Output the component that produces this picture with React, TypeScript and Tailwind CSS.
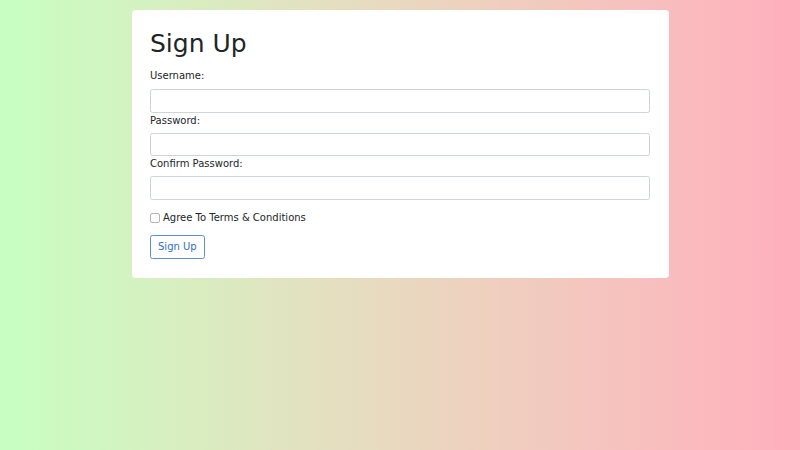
import React from "react";

export default function App() {
  return (
    <div
      className="min-h-screen w-full bg-gradient-to-r from-[#c7ffc1] to-[#ffafbd] pt-[10px] text-[#212529]"
      style={{ fontFamily: '"DejaVu Sans", "Liberation Sans", sans-serif' }}
    >
      <div className="mx-auto w-[537px] rounded-[4px] bg-white pl-[18.5px] pr-[18.75px] pt-[18.75px] pb-[18.75px]">
        <h1 className="mb-[9.5px] text-[25px] leading-[30px] font-normal">Sign Up</h1>
        <form className="flex flex-col text-[10px] leading-[15px]" onSubmit={(e) => e.preventDefault()}>
          <label className="mb-[5.5px] block">Username:</label>
          <input
            type="text"
            className="block h-[23.75px] w-full rounded-[2.5px] border border-[#ced4da] bg-white px-[7px] outline-none"
          />
          <label className="mb-[5px] block">Password:</label>
          <input
            type="password"
            className="block h-[23.75px] w-full rounded-[2.5px] border border-[#ced4da] bg-white px-[7px] outline-none"
          />
          <label className="mb-[5px] block">Confirm Password:</label>
          <input
            type="password"
            className="block h-[23.75px] w-full rounded-[2.5px] border border-[#ced4da] bg-white px-[7px] outline-none"
          />
          <div className="mt-[10px] flex h-[15px] items-center gap-[3px]">
            <span className="block h-[10px] w-[10px] rounded-[2px] border border-[#b5b5b5] bg-white" />
            <span>Agree To Terms &amp; Conditions</span>
          </div>
          <div className="mt-[10px]">
            <button
              type="submit"
              className="h-[23.75px] rounded-[2.5px] border border-[#5b8fd4] bg-white px-[7px] text-[10px] leading-[15px] text-[#2f6fc4]"
            >
              Sign Up
            </button>
          </div>
        </form>
      </div>
    </div>
  );
}
